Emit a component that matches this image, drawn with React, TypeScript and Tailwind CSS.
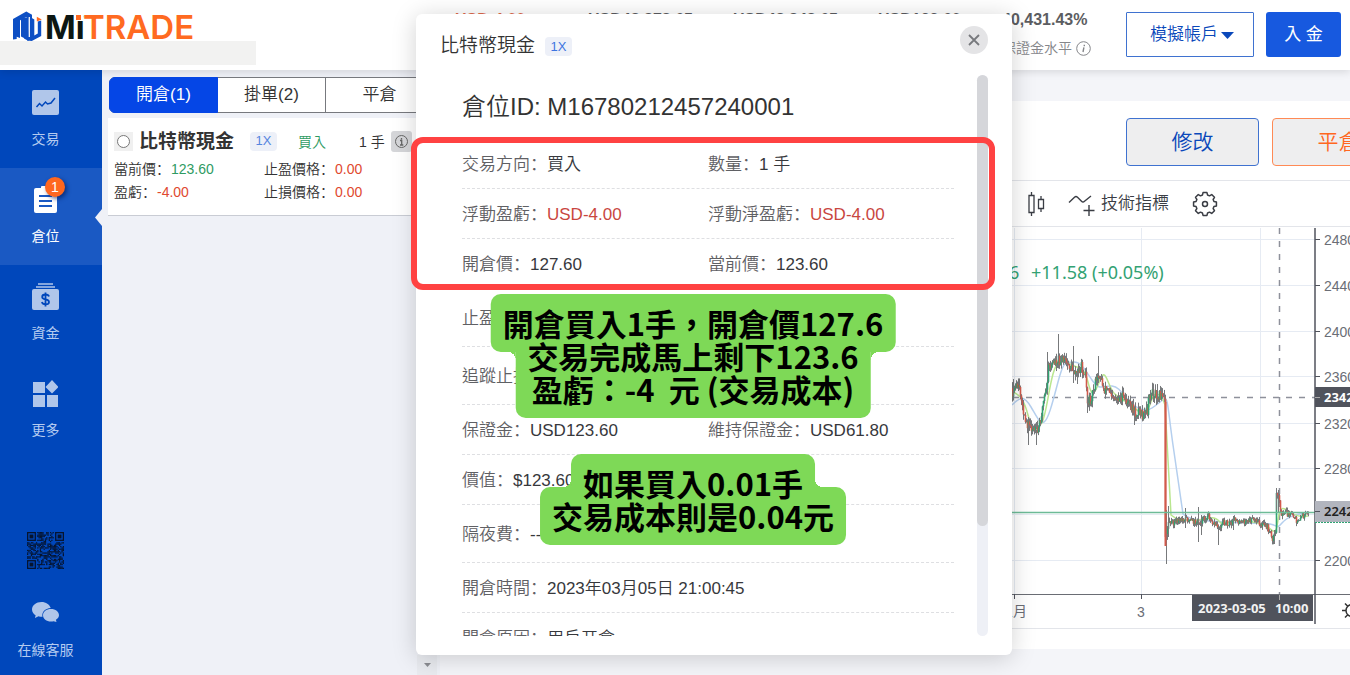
import type { ReactNode } from "react";

const UI_FONT = "font-['Liberation_Sans','Noto_Sans_CJK_TC',sans-serif]";

/* ---------- small pieces ---------- */

function Label({ text }: { text: string }) {
  return (
    <span>
      {text}
      <span className="font-['Noto_Sans_CJK_SC',sans-serif]">：</span>
    </span>
  );
}

function Leverage({ className }: { className: string }) {
  return (
    <span className={`flex h-[19px] w-[27px] items-center justify-center rounded-sm bg-[#edf0f8] text-[13px] ${className}`}>
      1X
    </span>
  );
}

/* ---------- header ---------- */

function Logo() {
  return (
    <svg width="184" height="33" viewBox="10 8 184 33" role="img" aria-label="MiTRADE" className="block">
      <g fill="#0d4fc4">
        <path d="M13 39.500V19L26.300 11.500 32 14.800V36l-3.700 3V18.500L26 17l-2 1.200V38l-3-1.500V19.800L20 20.400V38l-3.300-1.200V39Z" />
        <path d="M24 17.500h4.600V41L24 38.500Z" />
        <path d="M31 17.500l3.300 2V35.500L37.800 33.500V21.500L41.200 20.500V36L31.800 41 27 40.500Z" />
      </g>
      <path d="M29.300 17V37" stroke="#fff" strokeWidth="1.200" />
      <path d="m36.800 16.800 5 2.800-5 1.900Z" fill="#ff6a21" />
      <text x="45" y="39" fontFamily="Inter, sans-serif" fontSize="33" fontWeight="700" fill="#0c1713">
        Mi
      </text>
      <rect x="74" y="12" width="9" height="8" fill="#fff" />
      <rect x="76" y="15" width="5" height="5" fill="#ff6a21" />
      <text x="83" y="39" fontFamily="Inter, sans-serif" fontSize="33" fontWeight="600" fill="#ff6a21">
        TRADE
      </text>
    </svg>
  );
}

function Header() {
  return (
    <header className="relative z-10 flex h-[70px] shrink-0 items-start bg-white shadow-[0_2px_8px_rgba(0,0,0,0.12)]">
      <div className="w-64 shrink-0">
        <div className="h-[41px] pt-2 pl-2.5">
          <Logo />
        </div>
        <div className="h-6 bg-[#f2f2f1]" />
      </div>
      <div className="mr-[35px] ml-auto flex shrink-0 pt-2.5 text-base leading-5 font-bold text-[#5c5d61]">
        <div className="w-[133px] text-[#dd6a4c]">USD-4.00</div>
        <div className="w-[145px]">USD48,878.65</div>
        <div className="w-[145px]">USD48,848.65</div>
        <div className="w-[124px]">USD123.60</div>
        <div className="w-[89px]">
          <div>40,431.43%</div>
          <div className="mt-2 flex items-center justify-end gap-1 text-sm font-[350] whitespace-nowrap text-[#85868a]">
            保證金水平
            <svg width="15" height="15" viewBox="0 0 15 15" fill="none" stroke="#85868a">
              <circle cx="7.500" cy="7.500" r="6.800" />
              <path d="M8.300 3.800v1.400M7.900 6.300l-.9 4.700" strokeWidth="1.400" />
            </svg>
          </div>
        </div>
      </div>
      <div className="flex shrink-0 gap-3 pt-3 pr-[9px]">
        <div className="relative">
          <select
            aria-label="帳戶"
            className="h-[45px] w-32 appearance-none rounded-[1px] border border-[#3f72d0] bg-white pl-[23px] text-[17px] font-[350] text-[#0a48ba]"
          >
            <option>模擬帳戶</option>
          </select>
          <svg className="pointer-events-none absolute top-5 right-5" width="13" height="7" viewBox="0 0 13 7">
            <path d="M0 0h13L6.500 7Z" fill="#0a48ba" />
          </svg>
        </div>
        <button className="h-[45px] w-[75px] rounded-[3px] bg-[#1759df] text-[17px] text-white">入 金</button>
      </div>
    </header>
  );
}

/* ---------- sidebar ---------- */

function NavItem({ label, active, children }: { label: string; active?: boolean; children: ReactNode }) {
  return (
    <a
      href="#"
      className={
        active
          ? "relative flex h-[97px] flex-col items-center bg-[#1a59c3] pt-[17px] pr-[11px] text-white"
          : "relative flex h-[97px] flex-col items-center pt-[17px] pr-[11px] text-[#b4cbf0]"
      }
    >
      <span className="relative flex h-7 items-center">{children}</span>
      <span className="mt-[13px] text-[14px] leading-5">{label}</span>
      {active && (
        <svg className="absolute top-[41px] right-0" width="7" height="17" viewBox="0 0 7 17">
          <path d="M7 0v17L0 8.500Z" fill="#f0f1f7" />
        </svg>
      )}
    </a>
  );
}

function qrCells() {
  const n = 29;
  const cells: [number, number][] = [];
  let seed = 7;
  const inFinder = (x: number, y: number) => (x < 8 && y < 8) || (x > n - 9 && y < 8) || (x < 8 && y > n - 9);
  for (let y = 0; y < n; y++) {
    for (let x = 0; x < n; x++) {
      seed = (seed * 16807) % 2147483647;
      if (!inFinder(x, y) && seed / 2147483647 > 0.47) cells.push([x, y]);
    }
  }
  return cells;
}

function QrCode() {
  return (
    <svg width="37" height="37" viewBox="0 0 29 29" role="img" aria-label="QR code">
      {qrCells().map(([x, y]) => (
        <rect key={`${x}-${y}`} x={x} y={y} width="1" height="1" fill="#06142e" />
      ))}
      {[[0, 0], [22, 0], [0, 22]].map(([x, y]) => (
        <g key={`${x}-${y}`}>
          <rect x={x + 0.5} y={y + 0.5} width="6" height="6" fill="none" stroke="#06142e" />
          <rect x={x + 2} y={y + 2} width="3" height="3" fill="#06142e" />
        </g>
      ))}
    </svg>
  );
}

function Sidebar() {
  return (
    <nav className="flex w-[102px] shrink-0 flex-col bg-[#0047bb] pt-px">
      <NavItem label="交易">
        <svg width="27" height="25" viewBox="0 0 27 25">
          <rect width="27" height="25" rx="2" fill="#b0c6ea" />
          <path d="m4.500 17 3-3.500 2.500 2.500 3.500-4 2 2 3.500-1 4-5" fill="none" stroke="#0047bb" strokeWidth="1.500" />
        </svg>
      </NavItem>
      <NavItem label="倉位" active>
        <svg width="23" height="27" viewBox="0 0 23 27">
          <rect y="2" width="23" height="25" rx="2" fill="#fff" />
          <rect x="7" y="0" width="9" height="5" rx="1" fill="#fff" />
          <path d="M5 10h13M5 15h13M5 20h13" stroke="#1a59c3" strokeWidth="2" />
        </svg>
        <span className="absolute -top-2 left-[11px] flex h-5 w-5 items-center justify-center rounded-full bg-[#ff671f] text-sm text-white shadow-[2px_2px_4px_rgba(0,20,80,0.6)]">
          1
        </span>
      </NavItem>
      <NavItem label="資金">
        <svg width="27" height="27" viewBox="0 0 27 27">
          <path d="M6 1h15M4 4h19" stroke="#b0c6ea" strokeWidth="1.500" />
          <rect y="6" width="27" height="21" rx="2" fill="#b0c6ea" />
          <path
            d="M17 13.500c-.5-1.500-1.800-2-3.500-2-2 0-3.300.9-3.300 2.400 0 3.500 6.800 1.500 6.800 5 0 1.500-1.300 2.400-3.500 2.400-1.900 0-3.200-.7-3.600-2.300M13.500 9.500v14"
            fill="none"
            stroke="#0047bb"
            strokeWidth="1.800"
          />
        </svg>
      </NavItem>
      <NavItem label="更多">
        <svg width="25" height="27" viewBox="0 0 25 27" fill="#b0c6ea">
          <path d="M0 2h12v11H0ZM0 15h12v12H0ZM14 15h11v12H14ZM19 0l6.500 7L19 13.500 12.500 7Z" />
        </svg>
      </NavItem>
      <div className="mt-[73px] flex flex-col items-center pr-[11px] text-[#b4cbf0]">
        <QrCode />
        <a href="#" className="mt-[33px] flex flex-col items-center">
          <svg width="27" height="20" viewBox="0 0 27 20" fill="#b0c6ea">
            <path d="M9.500 0C4.200 0 0 3.200 0 7.500 0 10 1.500 12 3.600 13.300L3 16l3.500-1.800c1.200.4 2.700.6 4 .5C9.500 10 13 6.500 18.700 6 17.500 2.500 14 0 9.500 0Z" />
            <path d="M19 7c-4.600 0-8 2.700-8 6.200 0 3.600 3.400 6.300 8 6.300.9 0 1.800-.1 2.600-.3L24.500 20l-.6-2.300c1.900-1.100 3.100-2.700 3.100-4.500C27 9.700 23.500 7 19 7Z" />
          </svg>
          <span className="mt-[18px] text-[14px] leading-5">在線客服</span>
        </a>
      </div>
    </nav>
  );
}

/* ---------- positions list ---------- */

const CARD_FIELDS: { label: string; value: string; tone: string }[] = [
  { label: "當前價", value: "123.60", tone: "text-[#2f9b63]" },
  { label: "止盈價格", value: "0.00", tone: "text-[#e0492f]" },
  { label: "盈虧", value: "-4.00", tone: "text-[#e0492f]" },
  { label: "止損價格", value: "0.00", tone: "text-[#e0492f]" },
];

function Positions() {
  return (
    <section className="flex w-[338px] shrink-0 flex-col bg-[#eff1f7] pt-[7px] pl-1.5 font-[350]">
      <div role="tablist" className="ml-px flex h-9 w-[325px] rounded-md border border-[#77797e] bg-white text-[17px] text-[#333]">
        <button role="tab" className="-my-px -ml-px flex-1 rounded-l-md border border-[#0546e6] bg-[#0546e6] text-white">開倉(1)</button>
        <button role="tab" className="flex-1 border-r border-[#77797e]">掛單(2)</button>
        <button role="tab" className="flex-1">平倉</button>
      </div>
      <article className="mt-[5px] h-[98px] border-b border-[#c9ccd4] bg-white px-1.5 pt-3">
        <div className="flex h-[23px] items-center text-sm text-[#333]">
          <span className="flex h-[19px] w-[19px] items-center justify-center bg-[#f0f0f0]">
            <input type="radio" aria-label="比特幣現金" className="h-[13px] w-[13px] appearance-none rounded-full border border-[#777] bg-white" />
          </span>
          <h2 className="ml-1.5 w-[111px] text-[19px] font-bold">比特幣現金</h2>
          <Leverage className="text-[#5585df]" />
          <span className="ml-[21px] w-[61px] text-[#2f9b63]">買入</span>
          <span className="w-8">1 手</span>
          <button aria-label="詳情" className="flex h-[21px] w-[21px] items-center justify-center rounded-[3px] bg-[#d5d6d9]">
            <svg width="15" height="15" viewBox="0 0 15 15" fill="none" stroke="#666">
              <circle cx="7.500" cy="7.500" r="6" />
              <path d="M6 6.500h1.700V11M6 11h3.300M7.500 4v1.400" strokeWidth="1.300" />
            </svg>
          </button>
        </div>
        <div className="mt-1 grid auto-rows-[23px] grid-cols-[150px_1fr] text-sm text-[#333]">
          {CARD_FIELDS.map((f) => (
            <div key={f.label} className="flex items-center">
              <Label text={f.label} />
              <span className={`ml-px ${f.tone}`}>{f.value}</span>
            </div>
          ))}
        </div>
      </article>
      <div className="mt-auto mr-[3px] flex h-5 w-5 items-center justify-center self-end bg-[#e9ebf0]">
        <svg width="7" height="4" viewBox="0 0 7 4"><path d="M0 0h7L3.500 4Z" fill="#8b8d92" /></svg>
      </div>
    </section>
  );
}

/* ---------- chart ---------- */

const PRICE: [number, number][] = [
  [1000, 392], [1012, 391], [1017, 388], [1021, 395], [1023, 418], [1028, 424], [1033, 430], [1037, 433], [1040, 418],
  [1044, 397], [1046, 392], [1048, 368], [1053, 363], [1058, 359], [1063, 361], [1068, 365], [1073, 370], [1077, 373],
  [1080, 366], [1085, 372], [1087, 402], [1090, 399], [1094, 386], [1099, 374], [1103, 388], [1110, 391], [1115, 398],
  [1122, 398], [1127, 403], [1132, 407], [1135, 415], [1138, 410], [1143, 417], [1147, 411], [1149, 395], [1155, 393],
  [1160, 395], [1164, 401], [1165, 540], [1168, 521], [1172, 523], [1178, 521], [1184, 518], [1192, 522], [1200, 522],
  [1205, 518], [1209, 516], [1213, 523], [1218, 527], [1223, 522], [1231, 524], [1235, 519], [1240, 523], [1253, 520],
  [1260, 524], [1267, 527], [1272, 538], [1275, 535], [1276, 493], [1279, 498], [1281, 518], [1284, 513], [1291, 515],
  [1296, 521], [1302, 516], [1308, 516],
];

const SPIKES: [number, number, number][] = [
  [1013, 379, 396], [1028, 424, 445], [1036, 430, 445], [1047, 352, 380], [1058, 334, 360], [1073, 346, 383],
  [1077, 372, 384], [1087, 395, 413], [1098, 356, 375], [1134, 410, 425], [1153, 384, 398], [1157, 384, 396],
  [1166, 510, 564], [1168, 506, 537], [1185, 508, 528], [1198, 507, 542], [1201, 515, 535], [1218, 527, 545],
  [1233, 516, 530], [1274, 530, 544], [1276, 488, 510], [1278, 490, 512],
];

function candles() {
  const out: { x: number; open: number; close: number; hi: number; lo: number }[] = [];
  let seed = 42;
  const rnd = () => {
    seed = (seed * 16807) % 2147483647;
    return seed / 2147483647;
  };
  let prev = PRICE[0][1];
  let i = 0;
  for (let x = 1001; x <= 1308; x++) {
    while (i < PRICE.length - 2 && PRICE[i + 1][0] < x) i++;
    const [x0, y0] = PRICE[i];
    const [x1, y1] = PRICE[i + 1];
    const amp = x > 1168 ? 6 : 11;
    const close = y0 + ((y1 - y0) * (x - x0)) / (x1 - x0) + (rnd() - 0.5) * amp;
    out.push({
      x,
      open: prev,
      close,
      hi: Math.min(prev, close) - rnd() * (amp * 0.6),
      lo: Math.max(prev, close) + rnd() * (amp * 0.6),
    });
    prev = close;
  }
  return out;
}

const GRID_Y = [239, 285, 331, 376, 423, 468, 514, 560];
const PRICE_LABELS: [string, number][] = [
  ["24800", 239], ["24400", 285], ["24000", 331], ["23600", 376], ["23200", 423], ["22800", 468], ["22000", 560],
];

function Chart() {
  return (
    <svg width="910" height="401" viewBox="440 227 910 401" className="block" fontFamily="'Liberation Sans', 'Noto Sans CJK TC', sans-serif">
      <g stroke="#e6ebf3">
        {GRID_Y.map((y) => <path key={y} d={`M440 ${y}.500H1314`} />)}
        <path d="M1014.500 228V594M1141.500 228V594M1260.500 228V594" />
      </g>
      <text y="279" fontFamily="'Noto Sans', sans-serif" fontSize="18" fill="#33a273">
        <tspan x="1009">6</tspan>
        <tspan x="1031">+11.58 (+0.05%)</tspan>
      </text>
      <path d="M1000 397.500H1315" stroke="#8e919b" strokeWidth="1.500" strokeDasharray="6 7" />
      <path d="M1279.500 228V594" stroke="#8e919b" strokeWidth="1.500" strokeDasharray="6 7" />
      <path
        d="M1012 405C1020 397 1024 395 1031 407S1040 424 1044 422 1052 405 1058 382 1066 363 1073 362 1084 368 1092 380 1103 385 1112 386 1124 398 1132 404 1146 412 1152 408 1160 402 1164 399 1168 410 1173 445L1183 514C1190 521 1210 521 1225 522S1262 523 1270 524 1276 530 1282 523 1298 514 1308 512"
        fill="none"
        stroke="#b5cfee"
        strokeWidth="1.500"
      />
      <path
        d="M1012 392C1020 394 1024 400 1028 415S1036 430 1041 424 1048 392 1053 374 1064 361 1072 365 1084 366 1088 382 1094 396 1100 380 1108 390 1116 395 1130 404 1138 411 1148 410 1152 399 1163 398 1165 405L1171 515C1180 523 1200 520 1210 518S1220 528 1226 523 1262 522 1268 527 1276 536 1278 520 1284 508 1290 512 1300 517 1308 516"
        fill="none"
        stroke="#b9e68f"
        strokeWidth="1.500"
      />
      {candles().map((c) => (
        <g key={c.x}>
          <path d={`M${c.x + 0.5} ${c.hi}V${c.lo}`} stroke="#77797b" strokeWidth="1" />
          <path
            d={`M${c.x + 0.5} ${c.open}V${c.close}`}
            stroke={c.close > c.open ? "#d25a4c" : "#2fa372"}
            strokeWidth="1.600"
          />
        </g>
      ))}
      {SPIKES.map(([x, a, b]) => <path key={x} d={`M${x}.500 ${a}V${b}`} stroke="#77797b" />)}
      <path d="M1165.500 402V546" stroke="#d25a4c" strokeWidth="2" />
      <path d="M440 512.500H1315" stroke="#6dbb97" strokeWidth="1.500" />

      <path d="M440 594.500H1350" stroke="#6a6d74" />
      <path d="M1315 228V624" stroke="#50535c" strokeWidth="1.500" />
      <path d="M1014.500 594v5M1141.500 594v5" stroke="#50535c" />
      {PRICE_LABELS.map(([t, y]) => (
        <g key={t}>
          <path d={`M1315 ${y}.500h5`} stroke="#50535c" />
          <text x="1324" y={y + 6} fontSize="14" fill="#6b6e76">{t}</text>
        </g>
      ))}
      <rect x="1315" y="387" width="40" height="20" fill="#50535c" />
      <path d="M1315 397.500h5" stroke="#aaa" />
      <text x="1324" y="402" fontFamily="'Noto Sans', sans-serif" fontSize="13" fontWeight="700" fill="#fff">23420</text>
      <rect x="1315" y="501" width="40" height="21" fill="#b2b5be" />
      <path d="M1315 511.500h5" stroke="#50535c" />
      <path d="M1315 522.500h40" stroke="#2fa372" strokeDasharray="2 1" />
      <text x="1324" y="516" fontFamily="'Noto Sans', sans-serif" fontSize="13" fontWeight="600" fill="#222">22420</text>
      <text x="1027" y="616" textAnchor="end" fontSize="14" fill="#6b6e76">三月</text>
      <text x="1141" y="617" textAnchor="middle" fontSize="14" fill="#6b6e76">3</text>
      <rect x="1192" y="595" width="121" height="26" fill="#50535c" />
      <path d="M1279.500 595v5" stroke="#aaa" />
      <g fontFamily="'Noto Sans', sans-serif" fontSize="13" fontWeight="700" fill="#f2f2f2">
        <text x="1198" y="613">2023-03-05</text>
        <text x="1275" y="613">10:00</text>
      </g>
      <g fill="none" stroke="#333" strokeWidth="1.500">
        <circle cx="1352" cy="610.500" r="6" />
        <path d="M1342 610.500h4M1345 603.500l3 3M1345 617.500l3-3" />
      </g>
    </svg>
  );
}

function gearPath() {
  const teeth = 8;
  const pts: string[] = [];
  for (let i = 0; i < teeth; i++) {
    const base = (i / teeth) * Math.PI * 2 - Math.PI / 2;
    for (const [offset, r] of [[-0.28, 9.3], [-0.17, 11.6], [0.17, 11.6], [0.28, 9.3]]) {
      pts.push(`${(13 + Math.cos(base + offset) * r).toFixed(2)} ${(13 + Math.sin(base + offset) * r).toFixed(2)}`);
    }
  }
  return `M${pts.join("L")}Z`;
}

function Market() {
  return (
    <main className="flex min-w-0 flex-1 flex-col overflow-hidden bg-[#f4f5f9] pt-[31px] pb-[26px]">
      <div className="flex h-20 items-center gap-[13px] border-b border-[#e3e5ea] bg-white pt-0.5 pl-[686px] text-[21px] font-[350]">
        <button className="h-12 w-[133px] shrink-0 rounded border border-[#3f72d0] bg-[#eeeeef] text-[#0a48ba]">修改</button>
        <button className="h-12 w-[133px] shrink-0 rounded border border-[#ff8a55] bg-[#eeeeef] text-[#ff671f]">平倉</button>
      </div>
      <div className="flex h-[46px] items-center border-b border-[#e3e5ea] bg-white pl-[588px]">
        <button aria-label="圖表類型" className="shrink-0">
          <svg width="17" height="26" viewBox="0 0 17 26" fill="none" stroke="#3a3d44" strokeWidth="1.300">
            <path d="M1 4.500h5v17H1ZM3.500 1v3.500M3.500 21.500V25M10.500 8.500h5v9h-5ZM13 5v3.500M13 17.500V21" />
          </svg>
        </button>
        <button className="ml-[23px] flex shrink-0 items-center gap-1.5 text-[17px] font-[350] text-[#3a3d44]">
          <svg width="27" height="24" viewBox="0 0 27 24" fill="none" stroke="#3a3d44" strokeWidth="1.400">
            <path d="M1 10.500 6.500 5.200c1-1 2-1 3 0l4 4c1 1 2 1 3 0L23 4M15.500 18.500h11M21 13v11" />
          </svg>
          技術指標
        </button>
        <button aria-label="設定" className="ml-[23px] shrink-0">
          <svg width="26" height="26" viewBox="0 0 26 26" fill="none" stroke="#3a3d44" strokeWidth="1.500" strokeLinejoin="round">
            <path d={gearPath()} />
            <circle cx="13" cy="13" r="2.500" />
          </svg>
        </button>
      </div>
      <div className="border-b border-[#e3e5ea] bg-white"><Chart /></div>
      <div className="min-h-5 flex-1 bg-white" />
    </main>
  );
}

/* ---------- position detail dialog ---------- */

type Field = { label: string; value?: string; loss?: boolean };

const ROWS: { tall?: boolean; cells: Field[] }[] = [
  { cells: [{ label: "交易方向", value: "買入" }, { label: "數量", value: "1 手" }] },
  { cells: [{ label: "浮動盈虧", value: "USD-4.00", loss: true }, { label: "浮動淨盈虧", value: "USD-4.00", loss: true }] },
  { cells: [{ label: "開倉價", value: "127.60" }, { label: "當前價", value: "123.60" }] },
  { tall: true, cells: [{ label: "止盈" }] },
  { tall: true, cells: [{ label: "追蹤止損" }] },
  { cells: [{ label: "保證金", value: "USD123.60" }, { label: "維持保證金", value: "USD61.80" }] },
  { cells: [{ label: "價值", value: "$123.60" }] },
  { tall: true, cells: [{ label: "隔夜費", value: "--" }] },
  { cells: [{ label: "開倉時間", value: "2023年03月05日 21:00:45" }] },
  { cells: [{ label: "開倉原因", value: "用戶开倉" }] },
];

const CALLOUT = "font-['Noto_Sans_CJK_TC',sans-serif] text-[31px] leading-[33px] font-bold whitespace-pre text-black";

function Dialog() {
  return (
    <div role="dialog" aria-label="比特幣現金" className="absolute top-3.5 left-[416px] z-20 flex h-[641px] w-[596px] flex-col rounded-md bg-white pb-[19px] shadow-[0_3px_24px_rgba(0,0,0,0.18)]">
      <div className="flex h-[61px] shrink-0 items-center px-6 pt-1 font-[350]">
        <h1 className="text-[19px] text-[#333]">比特幣現金</h1>
        <Leverage className="ml-2.5 text-[#3c75e0]" />
        <button aria-label="關閉" className="mb-3.5 ml-auto flex h-7 w-7 items-center justify-center rounded-full bg-[#e4e4e6]">
          <svg width="12" height="12" viewBox="0 0 12 12" stroke="#77797d" strokeWidth="1.800"><path d="m1 1 10 10M11 1 1 11" /></svg>
        </button>
      </div>
      <div className="flex min-h-0 flex-1 justify-between pr-6 pl-[46px]">
        <div className="w-[492px] overflow-hidden font-[350]">
          <h2 className="flex h-16 items-center text-2xl text-[#333]">倉位ID: M16780212457240001</h2>
          {ROWS.map((row) => (
            <div
              key={row.cells[0].label}
              className={
                row.tall
                  ? "grid h-[58px] grid-cols-2 items-center border-b border-dashed border-[#dedfe2] text-[17px] leading-6"
                  : "grid h-[50px] grid-cols-2 items-center border-b border-dashed border-[#dedfe2] text-[17px] leading-6"
              }
            >
              {row.cells.map((c) => (
                <div key={c.label} className="whitespace-nowrap text-[#5f6064]">
                  <Label text={c.label} />
                  <span className={c.loss ? "text-[#c9473f]" : "text-[#37383c]"}>{c.value}</span>
                </div>
              ))}
            </div>
          ))}
        </div>
        <div className="w-[11px] rounded-full bg-[#eef0f6]">
          <div className="h-[451px] rounded-full bg-[#d5d6da]" />
        </div>
      </div>

      <div className="pointer-events-none absolute top-[123px] right-[17px] -left-[5px] h-[153px] rounded-xl border-[6px] border-[#ff4242]" />

      <div className={`absolute top-[280px] left-[277px] flex -translate-x-1/2 flex-col items-center ${CALLOUT}`}>
        <div className="rounded-[10px] bg-[#7ed957] px-3 pt-3 pb-[13px]">開倉買入1手，開倉價127.6</div>
        <div className="relative -mt-[13px] rounded-b-[10px] px-3 pb-[13px] text-center">
          <div className="absolute inset-x-0 top-[13px] bottom-0 -z-10 rounded-b-[10px] bg-[#7ed957]" />
          <span className="absolute top-[13px] -left-2 h-2 w-2 bg-[radial-gradient(circle_at_0_100%,transparent_8px,#7ed957_8px)]" />
          <span className="absolute top-[13px] -right-2 h-2 w-2 bg-[radial-gradient(circle_at_100%_100%,transparent_8px,#7ed957_8px)]" />
          <div>交易完成馬上剩下123.6</div>
          <div>盈虧：-4  元 (交易成本)</div>
        </div>
      </div>

      <div className={`absolute top-[440px] left-[277px] flex -translate-x-1/2 flex-col items-center ${CALLOUT}`}>
        <div className="relative z-10 px-3 pt-3">
          <div className="absolute inset-x-0 top-0 bottom-3 -z-10 rounded-t-[10px] bg-[#7ed957]" />
          <span className="absolute bottom-3 -left-2 h-2 w-2 bg-[radial-gradient(circle_at_0_0,transparent_8px,#7ed957_8px)]" />
          <span className="absolute -right-2 bottom-3 h-2 w-2 bg-[radial-gradient(circle_at_100%_0,transparent_8px,#7ed957_8px)]" />
          如果買入0.01手
        </div>
        <div className="-mt-3 rounded-[10px] bg-[#7ed957] px-3 pt-3 pb-[13px]">交易成本則是0.04元</div>
      </div>
    </div>
  );
}

export default function App() {
  return (
    <div className={`relative flex min-h-screen flex-col overflow-hidden bg-[#f4f5f9] ${UI_FONT}`}>
      <Header />
      <div className="flex flex-1 items-stretch">
        <Sidebar />
        <Positions />
        <Market />
      </div>
      <Dialog />
    </div>
  );
}
